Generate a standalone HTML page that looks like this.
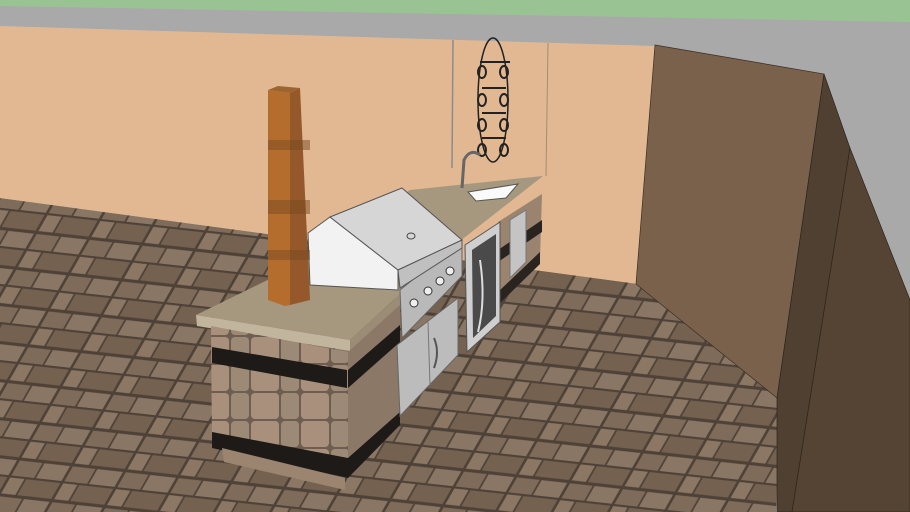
<!DOCTYPE html>
<html><head><meta charset="utf-8"><style>html,body{margin:0;padding:0;width:910px;height:512px;overflow:hidden;background:#a9a9a9}svg{display:block}</style></head><body>
<svg width="910" height="512" viewBox="0 0 910 512" xmlns="http://www.w3.org/2000/svg">
<defs>
<pattern id="tiles" width="56" height="36" patternUnits="userSpaceOnUse" patternTransform="skewX(-25) rotate(6)">
<rect width="56" height="36" fill="#4e4238"/>
<rect x="1.5" y="1.5" width="24" height="15" fill="#7f6b59"/>
<rect x="27.5" y="1.5" width="27" height="15" fill="#8a7664"/>
<rect x="1.5" y="18.5" width="15" height="16" fill="#8c7765"/>
<rect x="18.5" y="18.5" width="36" height="16" fill="#746150"/>
</pattern>
<pattern id="stone" width="50" height="28" patternUnits="userSpaceOnUse">
<rect width="50" height="28" fill="#6e5d50"/>
<rect x="1" y="1" width="28" height="26" rx="4" fill="#a8907c"/>
<rect x="31" y="1" width="18" height="26" rx="4" fill="#9d8a76"/>
</pattern>
</defs>
<rect width="910" height="512" fill="#a9a9a9"/>
<polygon points="0,0 910,0 910,22 0,6" fill="#9ac394"/>
<!-- floor -->
<polygon points="0,198 640,284 780,398 776,512 0,512" fill="url(#tiles)"/>
<!-- back wall -->
<polygon points="0,26 656,46 638,284 0,198" fill="#e2b893"/>
<line x1="453" y1="40" x2="452" y2="168" stroke="#8c8c8c" stroke-width="1.5"/>
<line x1="548" y1="43" x2="546" y2="176" stroke="#a08c78" stroke-width="1"/>
<!-- right walls -->
<polygon points="655,45 824,74 777,398 636,284" fill="#7a614c" stroke="#3a2e24" stroke-width="0.7"/>
<polygon points="824,74 850,148 792,512 777,512 777,398" fill="#4f4032" stroke="#2e241c" stroke-width="0.7"/>
<polygon points="850,148 910,300 910,512 792,512" fill="#554434" stroke="#2e241c" stroke-width="0.7"/>
<!-- wine rack -->
<ellipse cx="493" cy="100" rx="15" ry="62" fill="none" stroke="#222" stroke-width="1.5"/>
<g stroke="#222" stroke-width="2" fill="none">
<ellipse cx="482" cy="72" rx="4" ry="6"/><ellipse cx="504" cy="72" rx="4" ry="6"/>
<ellipse cx="482" cy="100" rx="4" ry="6"/><ellipse cx="504" cy="100" rx="4" ry="6"/>
<ellipse cx="482" cy="125" rx="4" ry="6"/><ellipse cx="504" cy="125" rx="4" ry="6"/>
<ellipse cx="482" cy="150" rx="4" ry="6"/><ellipse cx="504" cy="150" rx="4" ry="6"/>
<line x1="480" y1="62" x2="510" y2="62"/><line x1="482" y1="88" x2="506" y2="88"/><line x1="482" y1="113" x2="506" y2="113"/><line x1="482" y1="138" x2="506" y2="138"/>
</g>
<!-- right cabinets -->
<polygon points="498,222 542,194 540,258 498,300" fill="#9a8470"/>
<polygon points="498,250 542,220 542,232 498,262" fill="#2a2420"/>
<polygon points="498,292 540,252 540,264 498,305" fill="#2a2420"/>
<polygon points="510,220 526,210 526,262 510,278" fill="#c4c4c4" stroke="#777"/>
<!-- fridge -->
<polygon points="465,245 500,222 500,322 467,352" fill="#cfcfcf" stroke="#555"/>
<polygon points="472,250 496,234 496,316 473,338" fill="#4a4a4a"/>
<path d="M480 260 Q486 300 478 332" stroke="#ddd" stroke-width="2" fill="none"/>
<!-- counter -->
<polygon points="196,315 292,268 410,190 543,176 455,245 400,294 350,340" fill="#a6977f"/>
<polygon points="196,315 350,340 350,351 197,326" fill="#c2b59d"/>
<polygon points="350,340 400,294 400,305 350,352" fill="#9b8c76"/>
<!-- stone island front -->
<polygon points="211,326 348,352 348,478 212,447" fill="url(#stone)"/>
<polygon points="212,347 347,370 347,388 212,363" fill="#1e1a17"/>
<polygon points="212,432 348,458 348,478 212,448" fill="#1e1a17"/>
<polygon points="222,448 345,478 345,490 224,462" fill="#9b8470"/>
<polygon points="348,352 400,305 400,418 348,478" fill="#8c7866"/>
<polygon points="348,370 400,325 400,342 348,388" fill="#1e1a17"/>
<polygon points="348,458 400,412 400,425 348,478" fill="#1e1a17"/>
<!-- grill doors -->
<polygon points="397,345 458,298 458,355 400,416" fill="#bcbcbc" stroke="#666"/>
<line x1="428" y1="322" x2="430" y2="385" stroke="#777"/>
<path d="M434 338 Q440 352 434 368" stroke="#555" stroke-width="2" fill="none"/>
<!-- grill panel -->
<polygon points="400,290 462,240 462,276 402,338" fill="#b9b9b9" stroke="#666"/>
<g fill="#eee" stroke="#333"><circle cx="414" cy="303" r="4"/><circle cx="428" cy="291" r="4"/><circle cx="440" cy="281" r="4"/><circle cx="450" cy="271" r="4"/></g>
<!-- grill hood -->
<polygon points="308,233 330,217 398,270 398,290 310,285" fill="#f2f2f2" stroke="#555"/>
<polygon points="330,217 402,188 462,240 398,270" fill="#d6d6d6" stroke="#555"/>
<polygon points="398,270 462,240 462,248 400,288" fill="#c0c0c0" stroke="#555"/>
<ellipse cx="411" cy="236" rx="4" ry="3" fill="none" stroke="#444"/>
<!-- sink & faucet -->
<polygon points="468,192 518,184 506,198 476,201" fill="#fafafa" stroke="#555"/>
<path d="M462 188 L464 160 Q470 148 480 155" stroke="#666" stroke-width="3" fill="none"/>
<!-- post -->
<polygon points="268,90 290,93 290,305 285,306 268,300" fill="#b46d2c"/>
<polygon points="290,93 300,88 310,300 290,305" fill="#94582a"/>
<polygon points="268,90 278,86 300,88 290,93" fill="#9c6430"/>
<g fill="#7a4a22" opacity=".5"><rect x="268" y="140" width="42" height="10"/><rect x="268" y="200" width="42" height="14"/><rect x="268" y="250" width="42" height="10"/></g>
</svg>
</body></html>
